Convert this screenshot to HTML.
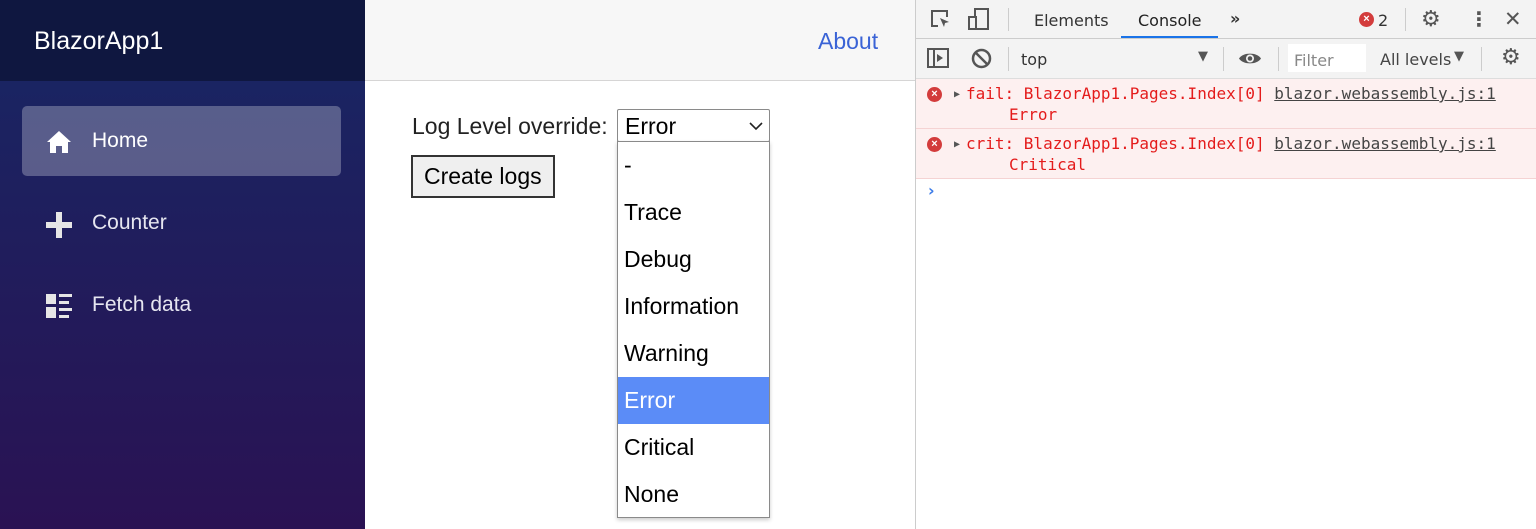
<!DOCTYPE html>
<html><head><meta charset="utf-8"><style>
*{box-sizing:border-box;margin:0;padding:0}
body{width:1536px;height:529px;overflow:hidden;position:relative;font-family:"Liberation Sans",sans-serif;background:#fff}
.side{position:absolute;left:0;top:0;width:365px;height:529px;background:linear-gradient(180deg,#1a2462 15%,#2a1253 100%)}
.brand{height:81px;background:#0f1740;color:#fff;font-size:25px;padding:27px 0 0 34px}
.nav{position:absolute;left:22px;width:319px;height:70px;border-radius:5px;color:#e6e6f0;font-size:21px;padding:23px 0 0 70px}
.nav.act{background:rgba(255,255,255,0.27);color:#fff}
.ic{position:absolute;left:24px;top:24px}
.top{position:absolute;left:365px;top:0;width:550px;height:81px;background:#f7f7f7;border-bottom:1px solid #d6d5d5}
.about{position:absolute;left:818px;top:28px;color:#3a63d6;font-size:23px}
.lbl{position:absolute;left:412px;top:113px;font-size:23px;color:#222}
.sel{position:absolute;left:617px;top:109px;width:153px;height:33px;border:1px solid #8a8a8a;border-radius:2px;font-size:23px;padding:3px 0 0 7px;color:#000}
.btn{position:absolute;left:411px;top:155px;width:144px;height:43px;border:2px solid #333;background:#efefef;font-size:23px;padding:6px 0 0 11px;color:#000}
.dd{position:absolute;left:617px;top:141px;width:153px;height:377px;border:1px solid #8a8a8a;background:#fff;box-shadow:0 2px 4px rgba(0,0,0,.2)}
.dd div{height:47px;font-size:23px;padding:10px 0 0 6px;color:#000}
.dd .hl{background:#5b8cf7;color:#fff}
.dev{position:absolute;left:915px;top:0;width:621px;height:529px;border-left:1px solid #ccc;background:#fff;font-family:"DejaVu Sans","Liberation Sans",sans-serif}
.bar1{height:39px;background:#f3f3f3;border-bottom:1px solid #ccc;position:relative}
.bar2{height:40px;background:#f3f3f3;border-bottom:1px solid #ddd;position:relative}
.t{position:absolute;font-size:16px;color:#333}
.row{height:50px;background:#fdf0f0;border-bottom:1px solid #f5d3d3;position:relative;font-family:"DejaVu Sans Mono","Liberation Mono",monospace;font-size:16px;color:#e41c1c}
.x{position:absolute;left:11px;top:8px;width:15px;height:15px;border-radius:50%;background:#d33c3c;color:#fff;font-size:11px;text-align:center;line-height:15px;font-family:"Liberation Sans";font-weight:bold}
.lk{color:#444;text-decoration:underline}
</style></head><body>
<div class="side">
<div class="brand">BlazorApp1</div>
<div class="nav act" style="top:106px"><svg class="ic" width="26" height="24" viewBox="0 0 26 24"><path d="M13 1 L25 12 H22 V23 H16 V16 H10 V23 H4 V12 H1Z" fill="#fff"/></svg>Home</div>
<div class="nav" style="top:188px"><svg class="ic" width="26" height="26" viewBox="0 0 26 26"><path d="M10 0h6v10h10v6H16v10h-6V16H0v-6h10z" fill="#e6e6e6"/></svg>Counter</div>
<div class="nav" style="top:270px"><svg class="ic" width="26" height="24" viewBox="0 0 26 24"><g fill="#e6e6e6"><rect x="0" y="0" width="10" height="10"/><rect x="0" y="13" width="10" height="11"/><rect x="13" y="0" width="13" height="3"/><rect x="13" y="7" width="10" height="3"/><rect x="13" y="14" width="13" height="3"/><rect x="13" y="21" width="10" height="3"/></g></svg>Fetch data</div>
</div>
<div class="top"></div>
<div class="about">About</div>
<div class="lbl">Log Level override:</div>
<div class="sel">Error<svg style="position:absolute;right:6px;top:12px" width="14" height="9" viewBox="0 0 14 9"><path d="M1 1l6 6 6-6" stroke="#222" stroke-width="1.6" fill="none"/></svg></div>
<div class="btn">Create logs</div>
<div class="dd"><div>-</div><div>Trace</div><div>Debug</div><div>Information</div><div>Warning</div><div class="hl">Error</div><div>Critical</div><div>None</div></div>
<div class="dev">
<div class="bar1">
<svg style="position:absolute;left:14px;top:9px" width="22" height="22" viewBox="0 0 22 22"><path d="M8 17H2V2h15v6" stroke="#555" stroke-width="2" fill="none"/><path d="M10 9l9 4-4 1-1 4z" fill="#555"/></svg>
<svg style="position:absolute;left:52px;top:7px" width="22" height="24" viewBox="0 0 22 24"><rect x="7" y="2" width="13" height="20" stroke="#555" stroke-width="2" fill="none"/><rect x="1" y="10" width="7" height="12" stroke="#555" stroke-width="2" fill="#f3f3f3"/></svg>
<div style="position:absolute;left:92px;top:8px;width:1px;height:23px;background:#ccc"></div>
<span class="t" style="left:118px;top:11px">Elements</span>
<span class="t" style="left:222px;top:11px;color:#222">Console</span>
<div style="position:absolute;left:205px;top:36px;width:97px;height:2px;background:#1a73e8"></div>
<span class="t" style="left:314px;top:9px;font-weight:bold">»</span>
<div class="x" style="left:443px;top:12px">×</div><span class="t" style="left:462px;top:11px">2</span>
<div style="position:absolute;left:489px;top:8px;width:1px;height:23px;background:#ccc"></div>
<span class="t" style="left:505px;top:7px;font-size:22px;color:#555">⚙</span>
<span class="t" style="left:553px;top:7px;font-size:20px;color:#555;font-weight:bold">⋮</span>
<span class="t" style="left:588px;top:7px;font-size:21px;color:#555">✕</span>
</div>
<div class="bar2">
<svg style="position:absolute;left:11px;top:9px" width="22" height="20" viewBox="0 0 22 20"><rect x="1" y="1" width="20" height="18" stroke="#555" stroke-width="2" fill="none"/><line x1="7" y1="1" x2="7" y2="19" stroke="#555" stroke-width="2"/><path d="M10 6l6 4-6 4z" fill="#555"/></svg>
<svg style="position:absolute;left:55px;top:9px" width="21" height="21" viewBox="0 0 21 21"><circle cx="10.5" cy="10.5" r="8.5" stroke="#555" stroke-width="2.5" fill="none"/><line x1="4.5" y1="4.5" x2="16.5" y2="16.5" stroke="#555" stroke-width="2.5"/></svg>
<div style="position:absolute;left:92px;top:8px;width:1px;height:24px;background:#ccc"></div>
<span class="t" style="left:105px;top:11px">top</span>
<span class="t" style="left:282px;top:10px;font-size:13px;color:#555">▼</span>
<div style="position:absolute;left:307px;top:8px;width:1px;height:24px;background:#ccc"></div>
<svg style="position:absolute;left:322px;top:12px" width="24" height="15" viewBox="0 0 24 15"><path d="M1 7.5C5 1 19 1 23 7.5C19 14 5 14 1 7.5z" fill="#555"/><circle cx="12" cy="7.5" r="4" fill="#f3f3f3"/><circle cx="12" cy="7.5" r="2.3" fill="#555"/></svg>
<div style="position:absolute;left:362px;top:8px;width:1px;height:24px;background:#ccc"></div>
<div style="position:absolute;left:372px;top:5px;width:78px;height:28px;background:#fff"></div>
<span class="t" style="left:378px;top:12px;color:#888">Filter</span>
<span class="t" style="left:464px;top:11px;color:#444">All levels</span>
<span class="t" style="left:538px;top:10px;font-size:13px;color:#555">▼</span>
<div style="position:absolute;left:565px;top:8px;width:1px;height:24px;background:#ccc"></div>
<span class="t" style="left:585px;top:6px;font-size:22px;color:#555">⚙</span>
</div>
<div class="row"><div class="x">×</div><span style="position:absolute;left:38px;top:10px;font-size:10px;color:#555">▶</span><span style="position:absolute;left:50px;top:5px">fail: BlazorApp1.Pages.Index[0] <span class="lk">blazor.webassembly.js:1</span></span><span style="position:absolute;left:93px;top:26px">Error</span></div>
<div class="row"><div class="x">×</div><span style="position:absolute;left:38px;top:10px;font-size:10px;color:#555">▶</span><span style="position:absolute;left:50px;top:5px">crit: BlazorApp1.Pages.Index[0] <span class="lk">blazor.webassembly.js:1</span></span><span style="position:absolute;left:93px;top:26px">Critical</span></div>
<span style="position:absolute;left:12px;top:181px;color:#3b7be8;font-size:16px;font-weight:bold">›</span>
</div>
</body></html>
